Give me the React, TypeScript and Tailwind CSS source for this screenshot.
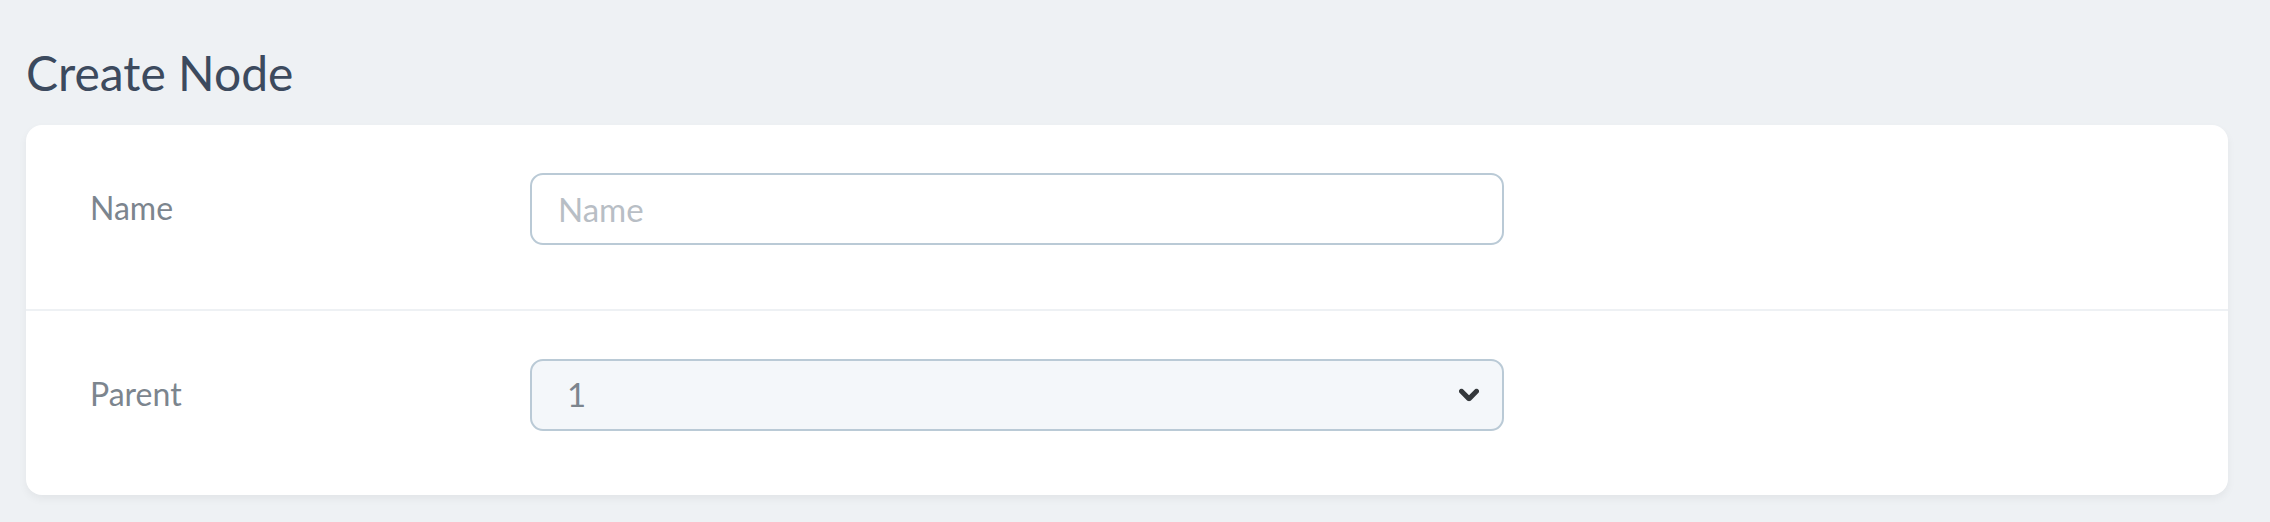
import React from 'react';

const font = { fontFamily: 'Lato, "Noto Sans", sans-serif' };

function Row({ label, children, last }: { label: string; children: React.ReactNode; last?: boolean }) {
  return (
    <div className={`flex items-start ${last ? '' : 'border-b-2 border-[#eef1f4]'}`}>
      <div className="w-[440px] shrink-0 px-[64px] pt-[63px]">
        <label className="block text-[32px] leading-[40px] text-[#7c858e]">{label}</label>
      </div>
      <div className="w-[1101px] pl-[64px] pr-[63px] pt-[48px] pb-[64px]">{children}</div>
    </div>
  );
}

export default function App() {
  return (
    <div className="min-h-screen bg-[#eef1f4] pl-[26px] pr-[42px] pt-[45px] pb-[28px]" style={font}>
      <h1 className="mb-[24px] text-[48px] font-normal leading-[56px] text-[#3c4a5e]">Create Node</h1>
      <div className="rounded-[16px] bg-white shadow-[0_4px_8px_rgba(0,0,0,0.05)]">
        <Row label="Name">
          <input
            type="text"
            placeholder="Name"
            className="h-[72px] w-full rounded-[13px] border-2 border-[#bacad6] bg-white pl-[26px] pr-[24px] text-[33px] text-[#7c858e] outline-none placeholder:text-[#b8bec5]"
          />
        </Row>
        <Row label="Parent" last>
          <div className="relative">
            <select
              defaultValue="1"
              className="h-[72px] w-full appearance-none rounded-[13px] border-2 border-[#bacad6] bg-[#f4f7fa] pl-[35px] pr-[60px] text-[33px] text-[#7c858e] outline-none"
            >
              <option value="1">1</option>
            </select>
            <svg
              className="pointer-events-none absolute right-[25px] top-1/2 -translate-y-1/2"
              width="20"
              height="13"
              viewBox="8 9.9 8 5.2"
              preserveAspectRatio="none"
            >
              <path
                fill="#35393c"
                d="M8.292 10.293a1.009 1.009 0 0 0 0 1.419l2.939 2.965c.218.215.5.322.779.322s.556-.107.769-.322l2.93-2.955a1.01 1.01 0 0 0 0-1.419.987.987 0 0 0-1.406 0l-2.298 2.317-2.307-2.327a.99.99 0 0 0-1.406 0z"
              />
            </svg>
          </div>
        </Row>
      </div>
    </div>
  );
}
